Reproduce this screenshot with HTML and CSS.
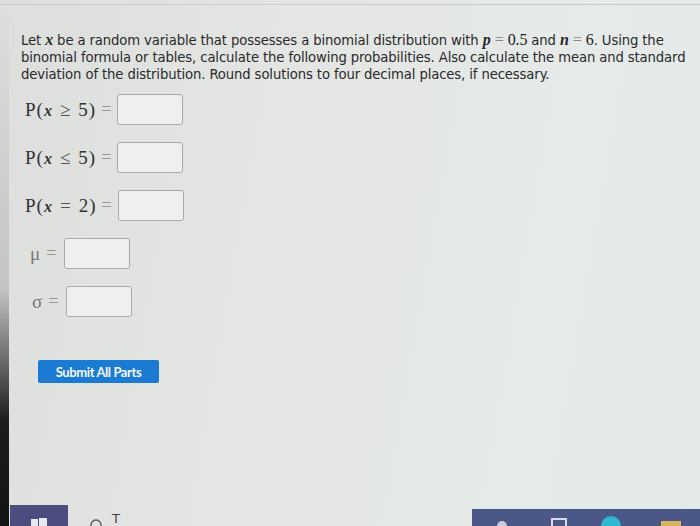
FILE: index.html
```html
<!DOCTYPE html>
<html>
<head>
<meta charset="utf-8">
<link rel="stylesheet" href="styles.css">
</head>
<body>
<div class="screen">
  <div class="edge"></div>
  <main class="content">
    <p class="prompt">Let <i class="mv">x</i> be a random variable that possesses a binomial distribution with <b class="mv">p</b> <span class="eq">=</span> <span class="num">0.5</span> and <i class="mv">n</i> <span class="eq">=</span> <span class="num">6</span>. Using the binomial formula or tables, calculate the following probabilities. Also calculate the mean and standard deviation of the distribution. Round solutions to four decimal places, if necessary.</p>
    <div class="rows">
      <div class="row"><span class="lbl">P(<i>x</i><span class="rel">≥</span>5)</span><span class="eq">=</span><span class="box"></span></div>
      <div class="row"><span class="lbl">P(<i>x</i><span class="rel">≤</span>5)</span><span class="eq">=</span><span class="box"></span></div>
      <div class="row"><span class="lbl">P(<i>x</i><span class="rel">=</span>2)</span><span class="eq">=</span><span class="box"></span></div>
      <div class="row short"><span class="lbl greek">μ</span><span class="eq">=</span><span class="box"></span></div>
      <div class="row short s2"><span class="lbl greek">σ</span><span class="eq">=</span><span class="box"></span></div>
    </div>
    <button class="submit">Submit All Parts</button>
  </main>
  <footer class="taskbar">
    <div class="start">
      <svg width="16" height="12" viewBox="0 0 16 12"><rect x="0" y="2" width="7" height="10" fill="#e8e8f0"/><rect x="8" y="1" width="8" height="11" fill="#e8e8f0"/></svg>
    </div>
    <div class="search">
      <svg width="12" height="10" viewBox="0 0 12 10"><circle cx="6" cy="7" r="5" fill="none" stroke="#555" stroke-width="1.3"/></svg>
      <span class="stext">T</span>
    </div>
    <div class="tray">
      <span class="ic dot"></span>
      <span class="ic grid"></span>
      <span class="ic edgeic"></span>
      <span class="ic folder"></span>
    </div>
  </footer>
</div>
</body>
</html>
```
FILE: styles.css
```css
html, body {
  margin: 0;
  padding: 0;
}
body {
  width: 700px;
  height: 526px;
  overflow: hidden;
  background: linear-gradient(100deg, #dcdfdc 0%, #e3e6e3 40%, #e6eae8 75%, #e4e9e7 100%);
}
.screen {
  position: relative;
  height: 526px;
  display: flex;
  flex-direction: column;
}
.edge {
  position: absolute;
  left: 0;
  top: 0;
  width: 9px;
  height: 526px;
  background: linear-gradient(180deg, rgba(40,40,40,0) 0%, rgba(40,40,40,0.15) 55%, #1d1d1f 80%, #141416 100%);
}
.content {
  flex: 1;
  padding: 26px 0 0 21px;
  border-top: 1px solid #c9cdca;
  margin-top: 4px;
}
.prompt {
  margin: 0;
  width: 670px;
  font-family: "DejaVu Sans Condensed", "DejaVu Sans", sans-serif;
  font-size: 14.7px;
  line-height: 17px;
  color: #2a2a2a;
  letter-spacing: -0.12px;
}
.mv {
  font-family: "Liberation Serif", serif;
  font-style: italic;
  font-weight: bold;
  font-size: 16px;
  line-height: 1;
}
.num {
  font-family: "Liberation Serif", serif;
  font-size: 16px;
  line-height: 1;
  color: #222;
}
.prompt .eq {
  font-family: "Liberation Serif", serif;
  color: #888;
  font-size: 16px;
  line-height: 1;
}
.rows {
  display: flex;
  flex-direction: column;
  gap: 17px;
  margin-top: 12px;
}
.row {
  display: flex;
  align-items: center;
  height: 31px;
  padding-left: 4px;
}
.lbl {
  font-family: "Liberation Serif", serif;
  font-size: 19px;
  color: #333;
  white-space: nowrap;
  margin-right: 5px;
  letter-spacing: 1px;
}
.lbl i {
  font-size: 16px;
  font-weight: bold;
}
.rel {
  margin: 0 7px;
  color: #555;
}
.row .eq {
  font-family: "Liberation Serif", serif;
  font-size: 18px;
  color: #999;
  margin-right: 6px;
}
.row.short .lbl {
  padding-left: 5px;
  margin-right: 5px;
  color: #777;
}
.row.s2 .lbl {
  padding-left: 7px;
}
.row.short .eq {
  margin-right: 8px;
}
.box {
  width: 64px;
  height: 29px;
  border: 1.5px solid #a9aba9;
  border-radius: 3px;
  background: #eef0ee;
}
.submit {
  display: block;
  margin: 43px 0 0 17px;
  width: 121px;
  height: 23px;
  border: none;
  border-radius: 2px;
  background: #1b7ad2;
  color: #f4f8ff;
  font-family: Lato, "DejaVu Sans", sans-serif;
  font-weight: bold;
  font-size: 13px;
  letter-spacing: -0.4px;
  padding: 0;
}
.taskbar {
  display: flex;
  align-items: flex-end;
  height: 22px;
}
.start {
  margin-left: 10px;
  width: 58px;
  height: 21px;
  background: #4a4d7e;
  display: flex;
  align-items: flex-end;
  justify-content: center;
  overflow: hidden;
}
.start svg { display: block; margin-bottom: -3px; }
.search {
  width: 404px;
  height: 21px;
  display: flex;
  align-items: flex-end;
  gap: 10px;
  padding-left: 22px;
  box-sizing: border-box;
}
.search svg { display: block; margin-bottom: -2px; }
.stext {
  font-family: "DejaVu Sans", sans-serif;
  font-size: 13px;
  line-height: 14px;
  color: #444;
}
.tray {
  flex: 1;
  height: 17px;
  background: #4b5887;
  display: flex;
  align-items: flex-end;
  gap: 34px;
  padding-left: 25px;
  overflow: hidden;
}
.ic {
  display: block;
  flex: none;
}
.dot {
  width: 10px;
  height: 10px;
  border-radius: 50%;
  background: #c8ccd8;
  margin-bottom: -5px;
}
.grid {
  width: 12px;
  height: 6px;
  border: 2px solid #d8dbe6;
  border-bottom: none;
  margin-left: 10px;
}
.edgeic {
  width: 20px;
  height: 10px;
  border-radius: 10px 10px 0 0;
  background: #2fb8d0;
}
.folder {
  width: 20px;
  height: 5px;
  background: #d8b45a;
  margin-left: 6px;
}
```
